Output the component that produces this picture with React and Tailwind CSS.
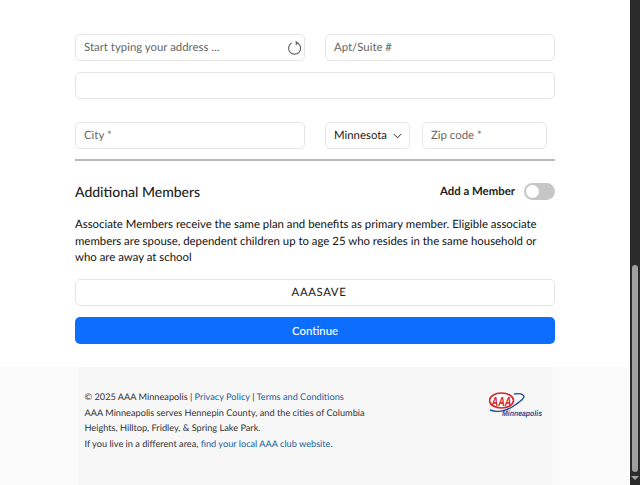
const font = { fontFamily: '"Lato", "Open Sans", sans-serif' };

function Field({ className = "", children }) {
  return (
    <div className={`h-[27px] flex items-center rounded-[5px] border border-[#e6e6e6] bg-white pl-[8px] text-[11.4px] ${className}`}>
      {children}
    </div>
  );
}

function Logo() {
  return (
    <svg width="58" height="28" viewBox="0 0 58 28" role="img" aria-label="AAA Minneapolis">
      <path d="M1 18 C8 21 18 19 26 13 C32 9 37 5 34 3 C32 1.5 28 1.5 25 2" fill="none" stroke="#1c4f9c" strokeWidth="1.4" />
      <ellipse cx="12.5" cy="8.5" rx="12" ry="7.5" fill="#fff" stroke="#d7252f" strokeWidth="1.6" />
      <text x="2.5" y="13.5" fontSize="13" fontWeight="900" fontStyle="italic" fill="#d7252f" textLength="20" lengthAdjust="spacingAndGlyphs" style={{ fontFamily: '"Liberation Sans", sans-serif' }}>AAA</text>
      <text x="13" y="24" fontSize="8" fontWeight="700" fontStyle="italic" fill="#1c4f9c" textLength="40" lengthAdjust="spacingAndGlyphs" style={{ fontFamily: '"Liberation Sans", sans-serif' }}>Minneapolis</text>
    </svg>
  );
}

export default function App() {
  return (
    <div className="flex h-[485px] w-[640px] overflow-hidden bg-white [text-rendering:geometricPrecision]" style={font}>
      <div className="flex w-[630px] flex-col">
        <main className="flex h-[367px] flex-col px-[75px] pt-[34px]">
          <div className="flex gap-[20px]">
            <Field className="w-[230px] justify-between pr-[1px] text-[#666666]">
              <span>Start typing your address ...</span>
              <svg width="16" height="16" viewBox="0 0 16 16" fill="none" stroke="#666" strokeWidth="1.2">
                <path d="M10.6 3 A6 6 0 1 1 4.6 3" />
                <path d="M8.6 0.4 L11.6 3 L8.8 5.4" fill="#666" stroke="none" />
              </svg>
            </Field>
            <Field className="flex-1 text-[#666666]">Apt/Suite #</Field>
          </div>
          <Field className="mt-[11px] w-full" />
          <div className="mt-[23px] flex">
            <Field className="w-[230px] text-[#666666]">City *</Field>
            <Field className="ml-[20px] w-[85px] text-[#1a1a1a]">
              <span>Minnesota</span>
              <svg width="9" height="6" viewBox="0 0 9 6" fill="none" stroke="#333" strokeWidth="1" className="ml-[6px]">
                <path d="M0.8 1 L4.5 4.8 L8.2 1" />
              </svg>
            </Field>
            <Field className="ml-[12px] w-[125px] text-[#666666]">Zip code *</Field>
          </div>
          <div className="mt-[10px] h-[2px] w-full bg-[#b9b9b9]" />
          <div className="mt-[22px] flex h-[17px] items-center justify-between">
            <span className="-mt-[1px] text-[14px] font-medium text-[#222222]">Additional Members</span>
            <div className="flex items-center">
              <span className="text-[11.4px] font-bold text-[#222222]">Add a Member</span>
              <div className="ml-[9px] flex h-[17px] w-[31px] items-center rounded-full bg-[#c6c6c6] pl-[2px]">
                <div className="h-[13px] w-[13px] rounded-full bg-white" />
              </div>
            </div>
          </div>
          <p className="mt-[17px] text-[11.4px] leading-[16.5px] text-[#111111]">
            Associate Members receive the same plan and benefits as primary member. Eligible associate members are spouse, dependent children up to age 25 who resides in the same household or who are away at school
          </p>
          <Field className="mt-[12.5px] w-full justify-center pl-0 tracking-[0.6px] text-[#1a1a1a]">AAASAVE</Field>
          <button className="mt-[11px] h-[27px] w-full rounded-[5px] bg-[#0d6efd] text-[11.4px] font-medium text-white">Continue</button>
        </main>
        <footer className="flex flex-1 justify-center bg-[#fbfbfb]">
          <div className="flex h-full w-[475px] justify-between bg-[#f7f7f7] pl-[7px] pr-[6px] pt-[22px]">
            <div className="w-[290px] text-[9.2px] leading-[15.5px] text-[#333333]">
              <div>© 2025 AAA Minneapolis | <span className="text-[#1a5f9e]">Privacy Policy</span> | <span className="text-[#1a5f9e]">Terms and Conditions</span></div>
              <div>AAA Minneapolis serves Hennepin County, and the cities of Columbia Heights, Hilltop, Fridley, &amp; Spring Lake Park.</div>
              <div>If you live in a different area, <span className="text-[#1a5f9e]">find your local AAA club website</span>.</div>
            </div>
            <div className="pt-[3px]"><Logo /></div>
          </div>
        </footer>
      </div>
      <div className="flex w-[10px] flex-col items-center bg-[#2b2b2b]">
        <div className="mt-[265px] h-[207px] w-[6px] rounded-full bg-[#9f9f9f]" />
        <div className="mt-[4px] h-0 w-0 border-x-[4px] border-t-[4px] border-x-transparent border-t-[#a3a3a3]" />
      </div>
    </div>
  );
}
